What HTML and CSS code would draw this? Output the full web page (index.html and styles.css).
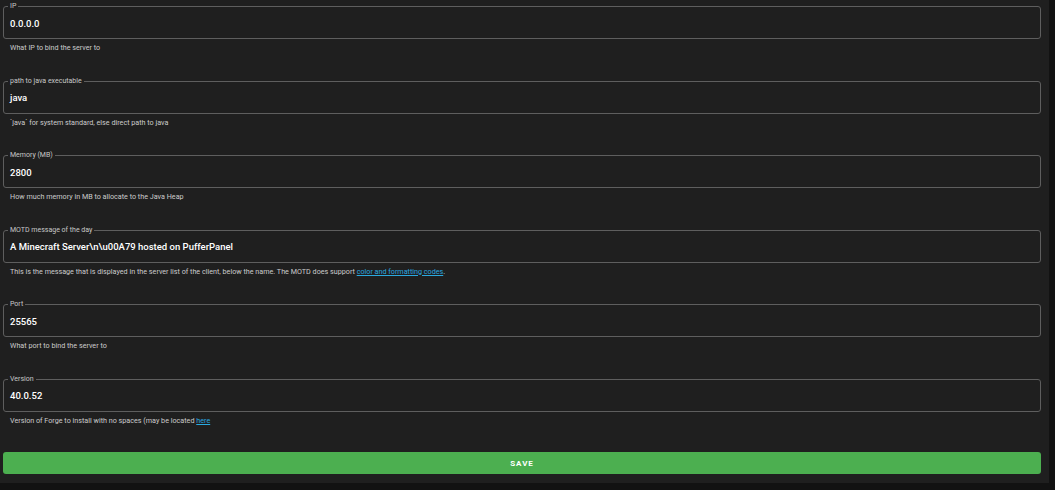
FILE: index.html
```html
<!DOCTYPE html>
<html>
<head>
<meta charset="utf-8">
<link rel="stylesheet" href="styles.css">
</head>
<body>
<div class="panel">
  <div class="fields">
    <div class="group">
      <div class="box"><span class="label">IP</span><span class="value">0.0.0.0</span></div>
      <div class="hint">What IP to bind the server to</div>
    </div>
    <div class="group">
      <div class="box"><span class="label">path to java executable</span><span class="value">java</span></div>
      <div class="hint">`java` for system standard, else direct path to java</div>
    </div>
    <div class="group">
      <div class="box"><span class="label">Memory (MB)</span><span class="value">2800</span></div>
      <div class="hint">How much memory in MB to allocate to the Java Heap</div>
    </div>
    <div class="group">
      <div class="box"><span class="label">MOTD message of the day</span><span class="value">A Minecraft Server\n\u00A79 hosted on PufferPanel</span></div>
      <div class="hint">This is the message that is displayed in the server list of the client, below the name. The MOTD does support <a class="link">color and formatting codes</a>.</div>
    </div>
    <div class="group">
      <div class="box"><span class="label">Port</span><span class="value">25565</span></div>
      <div class="hint">What port to bind the server to</div>
    </div>
    <div class="group">
      <div class="box"><span class="label">Version</span><span class="value">40.0.52</span></div>
      <div class="hint">Version of Forge to install with no spaces (may be located <a class="link">here</a></div>
    </div>
  </div>
  <button class="save">SAVE</button>
</div>
</body>
</html>
```
FILE: styles.css
```css
html, body {
  margin: 0;
  padding: 0;
  background: #121212;
  width: 1055px;
  height: 490px;
  overflow: hidden;
  font-family: Roboto, "Noto Sans", sans-serif;
}
.panel {
  width: 1049px;
  height: 483px;
  background: #1f1f1f;
  box-sizing: border-box;
  padding: 6px 8px 0 3px;
  display: flex;
  flex-direction: column;
}
.fields {
  display: flex;
  flex-direction: column;
  gap: 27.5px;
}
.group {
  display: flex;
  flex-direction: column;
}
.box {
  position: relative;
  height: 33px;
  box-sizing: border-box;
  border: 1px solid #5e5e5e;
  border-radius: 3px;
  display: flex;
  align-items: center;
  padding-left: 6px;
}
.label {
  position: absolute;
  left: 4px;
  top: -5px;
  padding: 0 2px;
  background: #1f1f1f;
  color: #c8c8c8;
  font-size: 7px;
  line-height: 8px;
}
.value {
  color: #ffffff;
  font-size: 9.5px;
  font-weight: 500;
  padding-top: 1px;
}
.hint {
  margin-top: 4px;
  padding-left: 7px;
  color: #cccccc;
  font-size: 7.2px;
  line-height: 10px;
}
.link {
  color: #2aa9e0;
  text-decoration: underline;
}
.save {
  margin-top: 26.5px;
  height: 22px;
  border: none;
  border-radius: 3px;
  background: #4caf50;
  color: #ffffff;
  font-family: Roboto, "Noto Sans", sans-serif;
  font-weight: 700;
  font-size: 8px;
  letter-spacing: 1px;
  padding: 0;
}
```
